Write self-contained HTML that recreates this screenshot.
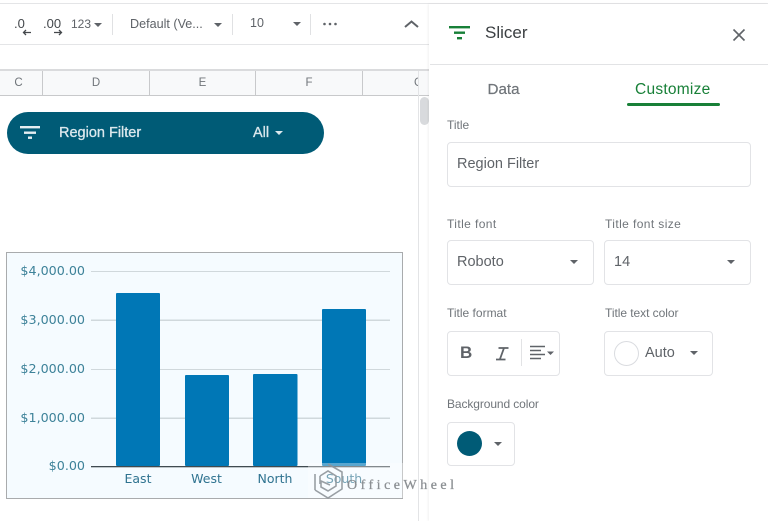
<!DOCTYPE html>
<html><head><meta charset="utf-8">
<style>
html,body{margin:0;padding:0;background:#fff}
#p{position:relative;width:768px;height:521px;overflow:hidden;background:#fff;font-family:"Liberation Sans",sans-serif;color:#5f6368;filter:blur(.3px)}
.a{position:absolute;white-space:nowrap}
.l{position:absolute}
.box{position:absolute;box-sizing:border-box;border:1px solid #e2e3e6;border-radius:4px;background:#fff}
.lab{position:absolute;font-size:12px;color:#70757a;white-space:nowrap;line-height:14px}
.val{position:absolute;font-size:14.5px;color:#5f6368;white-space:nowrap;line-height:16px}
.car{position:absolute;width:0;height:0;border-left:4px solid transparent;border-right:4px solid transparent;border-top:4px solid #5f6368}
.col{position:absolute;top:71px;height:24px;line-height:24px;font-size:11.5px;color:#70757a;text-align:center;overflow:hidden}
</style></head><body><div id="p">
<!-- toolbar -->
<div class="l" style="left:0;top:3px;width:768px;height:1px;background:#e4e5e7"></div>
<div class="l" style="left:0;top:44px;width:429px;height:1px;background:#e4e5e7"></div>
<div class="a" style="left:14px;top:17px;font-size:13px;color:#44484c;line-height:14px">.0</div>
<svg class="l" style="left:22px;top:29px" width="10" height="7"><path d="M9 3.500H2M4 1L1.500 3.500L4 6" stroke="#44484c" stroke-width="1.300" fill="none"/></svg>
<div class="a" style="left:43px;top:17px;font-size:13px;color:#44484c;line-height:14px">.00</div>
<svg class="l" style="left:53px;top:29px" width="10" height="7"><path d="M1 3.500H8M6 1L8.500 3.500L6 6" stroke="#44484c" stroke-width="1.300" fill="none"/></svg>
<div class="a" style="left:71px;top:17px;font-size:12px;color:#5f6368;line-height:14px">123</div>
<div class="car" style="left:94px;top:23px"></div>
<div class="l" style="left:112px;top:14px;width:1px;height:21px;background:#e0e1e3"></div>
<div class="a" style="left:130px;top:17px;font-size:12.600px;color:#5f6368;line-height:14px">Default (Ve...</div>
<div class="car" style="left:214px;top:23px"></div>
<div class="l" style="left:232px;top:14px;width:1px;height:21px;background:#e0e1e3"></div>
<div class="a" style="left:250px;top:16px;font-size:12.500px;color:#5f6368;line-height:14px">10</div>
<div class="car" style="left:293px;top:22px"></div>
<div class="l" style="left:310px;top:14px;width:1px;height:21px;background:#e0e1e3"></div>
<svg class="l" style="left:323px;top:21px" width="16" height="6"><circle cx="1.500" cy="3" r="1.300" fill="#5f6368"/><circle cx="7" cy="3" r="1.300" fill="#5f6368"/><circle cx="12.500" cy="3" r="1.300" fill="#5f6368"/></svg>
<svg class="l" style="left:403px;top:18px" width="16" height="12"><path d="M2 9L8.500 3.500L15 9" stroke="#5f6368" stroke-width="2" fill="none"/></svg>
<!-- column header -->
<div class="l" style="left:0;top:70px;width:429px;height:25px;background:#f8f9fa"></div>
<div class="l" style="left:0;top:69px;width:429px;height:2px;background:#dadbdd"></div>
<div class="l" style="left:0;top:95px;width:429px;height:1px;background:#c8c9cb"></div>
<div class="l" style="left:42px;top:71px;width:1px;height:24px;background:#c8c9cb"></div>
<div class="l" style="left:149px;top:71px;width:1px;height:24px;background:#c8c9cb"></div>
<div class="l" style="left:255px;top:71px;width:1px;height:24px;background:#c8c9cb"></div>
<div class="l" style="left:362px;top:71px;width:1px;height:24px;background:#c8c9cb"></div>
<div class="l" style="left:418px;top:71px;width:1px;height:450px;background:#e3e4e6"></div>
<div class="col" style="left:0;width:37px">C</div>
<div class="col" style="left:43px;width:106px">D</div>
<div class="col" style="left:150px;width:105px">E</div>
<div class="col" style="left:256px;width:106px">F</div>
<div class="col" style="left:363px;width:55px;text-align:left"><span style="margin-left:51px">G</span></div>
<!-- scrollbar -->
<div class="l" style="left:420px;top:97px;width:9px;height:28px;border-radius:5px;background:#d8dadd"></div>
<!-- slicer pill -->
<div class="l" style="left:7px;top:112px;width:317px;height:42px;border-radius:21px;background:#005b76"></div>
<svg class="l" style="left:20px;top:125px" width="21" height="15"><rect x="0" y="1" width="20" height="2.400" fill="#e4eef2"/><rect x="4" y="6.500" width="12" height="2.400" fill="#e4eef2"/><rect x="8" y="11.500" width="4" height="2.400" fill="#e4eef2"/></svg>
<div class="a" style="left:59px;top:125px;font-size:14.500px;line-height:16px;color:#dbe8ed;-webkit-text-stroke:.3px #dbe8ed">Region Filter</div>
<div class="a" style="left:253px;top:125px;font-size:14.500px;line-height:16px;color:#dbe8ed;-webkit-text-stroke:.3px #dbe8ed">All</div>
<div class="car" style="left:275px;top:131px;border-top-color:#dbe8ed"></div>
<!-- chart -->
<svg class="l" style="left:0;top:245px" width="429" height="276">
<rect x="6.500" y="7.500" width="396" height="246" fill="#f5fbff" stroke="#a9abad"/>
<g fill="#d0d8dc"><rect x="91" y="26" width="299" height="1"/><rect x="91" y="74.500" width="299" height="1.500"/><rect x="91" y="124" width="299" height="1"/><rect x="91" y="172.500" width="299" height="1.500"/></g>
<g fill="#0077b6"><rect x="116" y="48" width="44" height="173" rx="1"/><rect x="185" y="130" width="44" height="91" rx="1"/><rect x="253" y="129" width="44.500" height="92" rx="1"/><rect x="322" y="64" width="44" height="157" rx="1"/></g>
<rect x="91" y="221" width="299" height="1.300" fill="#3f4a50"/>
<g font-family="'DejaVu Sans',sans-serif" font-size="12.700" fill="#3d8299" text-anchor="end"><text x="85" y="30">$4,000.00</text><text x="85" y="79">$3,000.00</text><text x="85" y="128">$2,000.00</text><text x="85" y="177">$1,000.00</text><text x="85" y="225">$0.00</text></g>
<g font-family="'DejaVu Sans',sans-serif" font-size="12.500" fill="#2f7390" text-anchor="middle"><text x="138" y="238">East</text><text x="206.500" y="238">West</text><text x="275" y="238">North</text><text x="344" y="238">South</text></g>
</svg>
<!-- panel -->
<div class="l" style="left:429px;top:4px;width:339px;height:517px;background:#fff;box-shadow:-1px 0 2px rgba(0,0,0,.06)"></div>
<div class="l" style="left:430px;top:64px;width:338px;height:1px;background:#e2e3e5"></div>
<svg class="l" style="left:449px;top:26px" width="22" height="14"><rect x="0" y="0" width="21" height="2.400" fill="#188038"/><rect x="5" y="5.500" width="11" height="2.400" fill="#188038"/><rect x="8" y="11" width="5" height="2.400" fill="#188038"/></svg>
<div class="a" style="left:485px;top:24px;font-size:17px;line-height:18px;color:#3c4043">Slicer</div>
<svg class="l" style="left:732px;top:28px" width="14" height="14"><path d="M1.500 1.500L12.500 12.500M12.500 1.500L1.500 12.500" stroke="#5f6368" stroke-width="1.600"/></svg>
<div class="a" style="left:487.500px;top:82px;font-size:15.200px;line-height:16px;color:#70757a;-webkit-text-stroke:.2px #70757a">Data</div>
<div class="a" style="left:635px;top:82px;font-size:15.500px;line-height:16px;color:#188038;letter-spacing:.25px">Customize</div>
<div class="l" style="left:627px;top:103px;width:93px;height:3px;border-radius:2px;background:#188038"></div>
<div class="lab" style="left:447px;top:118px">Title</div>
<div class="box" style="left:447px;top:142px;width:304px;height:45px"></div>
<div class="val" style="left:457px;top:156px">Region Filter</div>
<div class="lab" style="left:447px;top:217px;letter-spacing:.4px">Title font</div>
<div class="lab" style="left:605px;top:217px;letter-spacing:.4px">Title font size</div>
<div class="box" style="left:447px;top:240px;width:147px;height:45px"></div>
<div class="val" style="left:457px;top:254px">Roboto</div>
<div class="car" style="left:570px;top:260px"></div>
<div class="box" style="left:604px;top:240px;width:147px;height:45px"></div>
<div class="val" style="left:614px;top:254px">14</div>
<div class="car" style="left:727px;top:260px"></div>
<div class="lab" style="left:447px;top:306px">Title format</div>
<div class="lab" style="left:605px;top:306px;letter-spacing:-.05px">Title text color</div>
<div class="box" style="left:447px;top:331px;width:113px;height:45px"></div>
<div class="a" style="left:460px;top:344px;font-size:17px;font-weight:bold;line-height:18px;color:#5f6368">B</div>
<svg class="l" style="left:495px;top:346px" width="14" height="15"><path d="M3.500 2H13.500M9 2L5 13M1 13.500H10.500" stroke="#5f6368" stroke-width="1.800" fill="none"/></svg>
<div class="l" style="left:521px;top:339px;width:1px;height:27px;background:#e2e3e5"></div>
<svg class="l" style="left:530px;top:345px" width="26" height="16"><path d="M0 1.500H15M0 5.500H11M0 9.500H15M0 13.500H11" stroke="#5f6368" stroke-width="1.600"/><path d="M17 6.500H24L20.500 10Z" fill="#5f6368"/></svg>
<div class="box" style="left:604px;top:331px;width:109px;height:45px"></div>
<div class="l" style="left:614px;top:341px;width:25px;height:25px;box-sizing:border-box;border:1px solid #dadce0;border-radius:50%"></div>
<div class="val" style="left:645px;top:345px">Auto</div>
<div class="car" style="left:690px;top:351px"></div>
<div class="lab" style="left:447px;top:397px;letter-spacing:-.1px">Background color</div>
<div class="box" style="left:447px;top:422px;width:68px;height:44px"></div>
<div class="l" style="left:457px;top:431px;width:25px;height:25px;border-radius:50%;background:#005b76"></div>
<div class="car" style="left:494px;top:442px"></div>
<!-- watermark -->
<svg class="l" style="left:300px;top:455px" width="170" height="50">
<rect x="8" y="8" width="95" height="35" fill="#fff" opacity=".35"/>
<g fill="none" stroke="#8f959b" stroke-width="1.600" opacity=".9"><path d="M28 9L42 17V34L28 43L15 35"/><path d="M15 19V35M20 21L28 16L36 21V31L28 36L21 32V26L30 30M20 29V21"/></g>
<text x="47" y="34" font-family="'Liberation Serif',serif" font-size="14" letter-spacing="3.500" fill="#7f8387" stroke="#7f8387" stroke-width=".25" opacity=".9">OfficeWheel</text>
</svg>
</div></body></html>
